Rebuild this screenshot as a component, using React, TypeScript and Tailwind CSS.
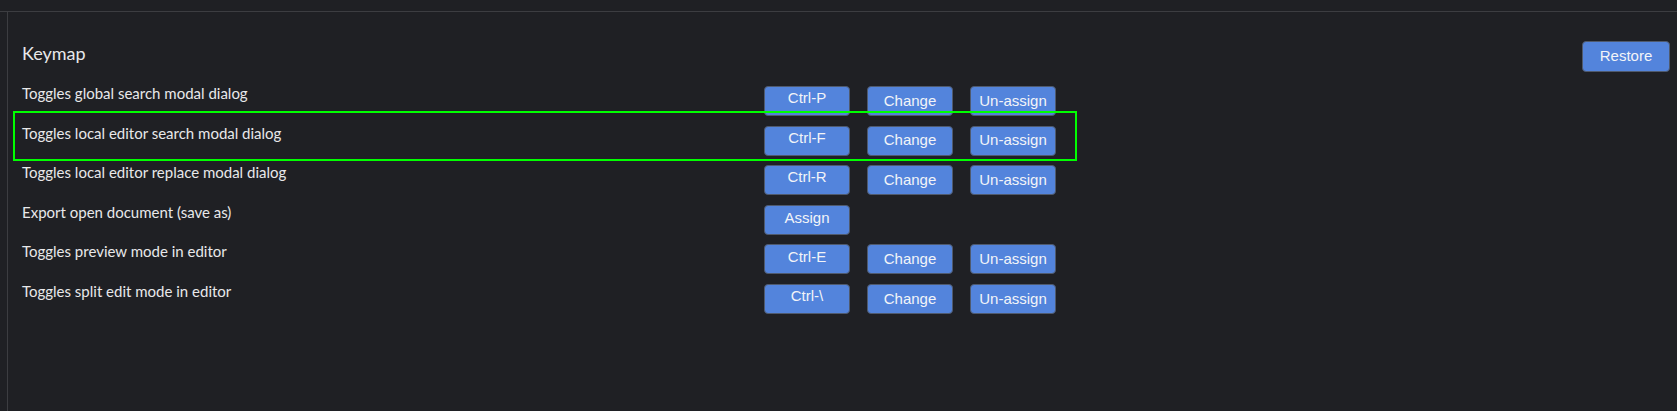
import React from "react";

type Binding = { label: string; key?: string };

const bindings: Binding[] = [
  { label: "Toggles global search modal dialog", key: "Ctrl-P" },
  { label: "Toggles local editor search modal dialog", key: "Ctrl-F" },
  { label: "Toggles local editor replace modal dialog", key: "Ctrl-R" },
  { label: "Export open document (save as)" },
  { label: "Toggles preview mode in editor", key: "Ctrl-E" },
  { label: "Toggles split edit mode in editor", key: "Ctrl-\\" },
];

const btn =
  "flex h-[30px] w-[86px] items-center justify-center rounded-[4px] border border-[#4f5a6e] bg-[#5384dc] font-['Liberation_Sans',Arial,sans-serif] text-[15px] text-[#f2f4f8]";

export default function App() {
  return (
    <div className="relative min-h-[411px] w-full bg-[#1f2024] pt-[11px] font-['Lato',sans-serif] text-[#e8e8ea]">
      <div className="flex min-h-[400px] border-t border-[#3c3d41]">
        <div className="w-[7px] shrink-0" />
        <div className="flex-1 border-l border-[#3c3d41] pl-[14px] pr-[7px] pt-[29px]">
          {/* Header */}
          <div className="mb-[12px] flex items-start justify-between">
            <h2 className="mt-[2px] text-[18px] leading-[1.2]">Keymap</h2>
            <button className={btn.replace("w-[86px]", "w-[88px]") + " h-[31px]"}>Restore</button>
          </div>

          {/* Rows */}
          <div className="flex flex-col">
            {bindings.map((b) => (
              <div key={b.label} className="flex h-[39.6px] items-start">
                <div className="w-[742px] shrink-0 text-[15px] leading-[18px]">{b.label}</div>
                <div className="mt-[2px] flex gap-[17px]">
                  {b.key ? (
                    <>
                      <button className={btn + " pb-[5px]"}>{b.key}</button>
                      <button className={btn}>Change</button>
                      <button className={btn}>Un-assign</button>
                    </>
                  ) : (
                    <button className={btn + " pb-[3px]"}>Assign</button>
                  )}
                </div>
              </div>
            ))}
          </div>
        </div>
      </div>

      {/* highlight overlay */}
      <div className="pointer-events-none absolute left-[13px] top-[111px] h-[50px] w-[1064px] border-2 border-[#00ff00]" />
    </div>
  );
}
